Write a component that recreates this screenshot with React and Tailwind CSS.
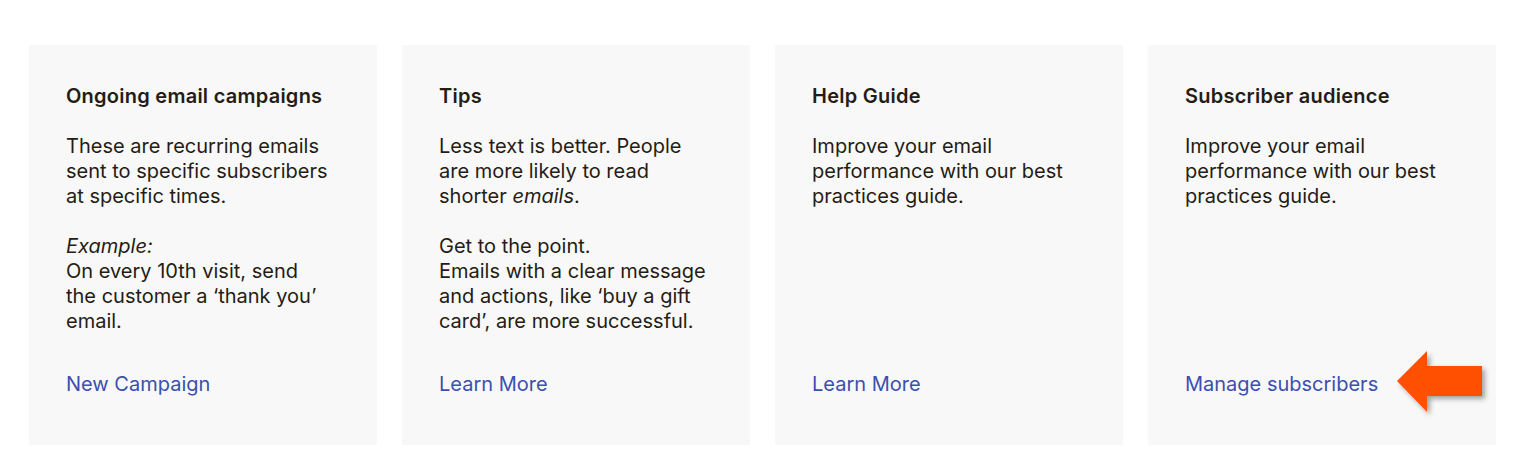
import React from "react";

const cards = [
  {
    title: "Ongoing email campaigns",
    body: (
      <>
        <p>
          These are recurring emails
          <br />
          sent to specific subscribers
          <br />
          at specific times.
        </p>
        <p className="mt-[25px]">
          <em>Example:</em>
          <br />
          On every 10th visit, send
          <br />
          the customer a ‘thank you’
          <br />
          email.
        </p>
      </>
    ),
    link: "New Campaign",
  },
  {
    title: "Tips",
    body: (
      <>
        <p>
          Less text is better. People
          <br />
          are more likely to read
          <br />
          shorter <em>emails</em>.
        </p>
        <p className="mt-[25px]">
          Get to the point.
          <br />
          Emails with a clear message
          <br />
          and actions, like ‘buy a gift
          <br />
          card’, are more successful.
        </p>
      </>
    ),
    link: "Learn More",
  },
  {
    title: "Help Guide",
    body: (
      <p>
        Improve your email
        <br />
        performance with our best
        <br />
        practices guide.
      </p>
    ),
    link: "Learn More",
  },
  {
    title: "Subscriber audience",
    body: (
      <p>
        Improve your email
        <br />
        performance with our best
        <br />
        practices guide.
      </p>
    ),
    link: "Manage subscribers",
    arrow: true,
  },
];

function Arrow() {
  return (
    <svg
      className="absolute left-[248px] top-[304px]"
      width="96"
      height="72"
      viewBox="0 0 96 72"
    >
      <defs>
        <filter id="sh" x="-20%" y="-20%" width="150%" height="150%">
          <feDropShadow dx="3" dy="3" stdDeviation="2.5" floodColor="#000" floodOpacity="0.35" />
        </filter>
      </defs>
      <polygon
        points="1,32 31,2 31,17 86,17 86,47 31,47 31,63"
        fill="#ff4f00"
        filter="url(#sh)"
      />
    </svg>
  );
}

export default function App() {
  return (
    <div
      className="w-[1530px] h-[469px] bg-white pt-[45px] pl-[29px]"
      style={{ fontFamily: "Inter, 'Noto Sans', sans-serif" }}
    >
      <div className="flex gap-[25px]">
        {cards.map((c, i) => (
          <div
            key={i}
            className="relative flex flex-col w-[348px] h-[400px] bg-[#f8f8f8] pt-[39px] pb-[48px] pl-[37px] pr-4 text-[20px] leading-[25px] text-[#241c15]"
          >
            <h3 className="font-semibold tracking-[0.25px] mb-[25px]">{c.title}</h3>
            <div className="whitespace-nowrap">{c.body}</div>
            <a href="#" className="mt-auto text-[#3b4fb0]">
              {c.link}
            </a>
            {c.arrow && <Arrow />}
          </div>
        ))}
      </div>
    </div>
  );
}
